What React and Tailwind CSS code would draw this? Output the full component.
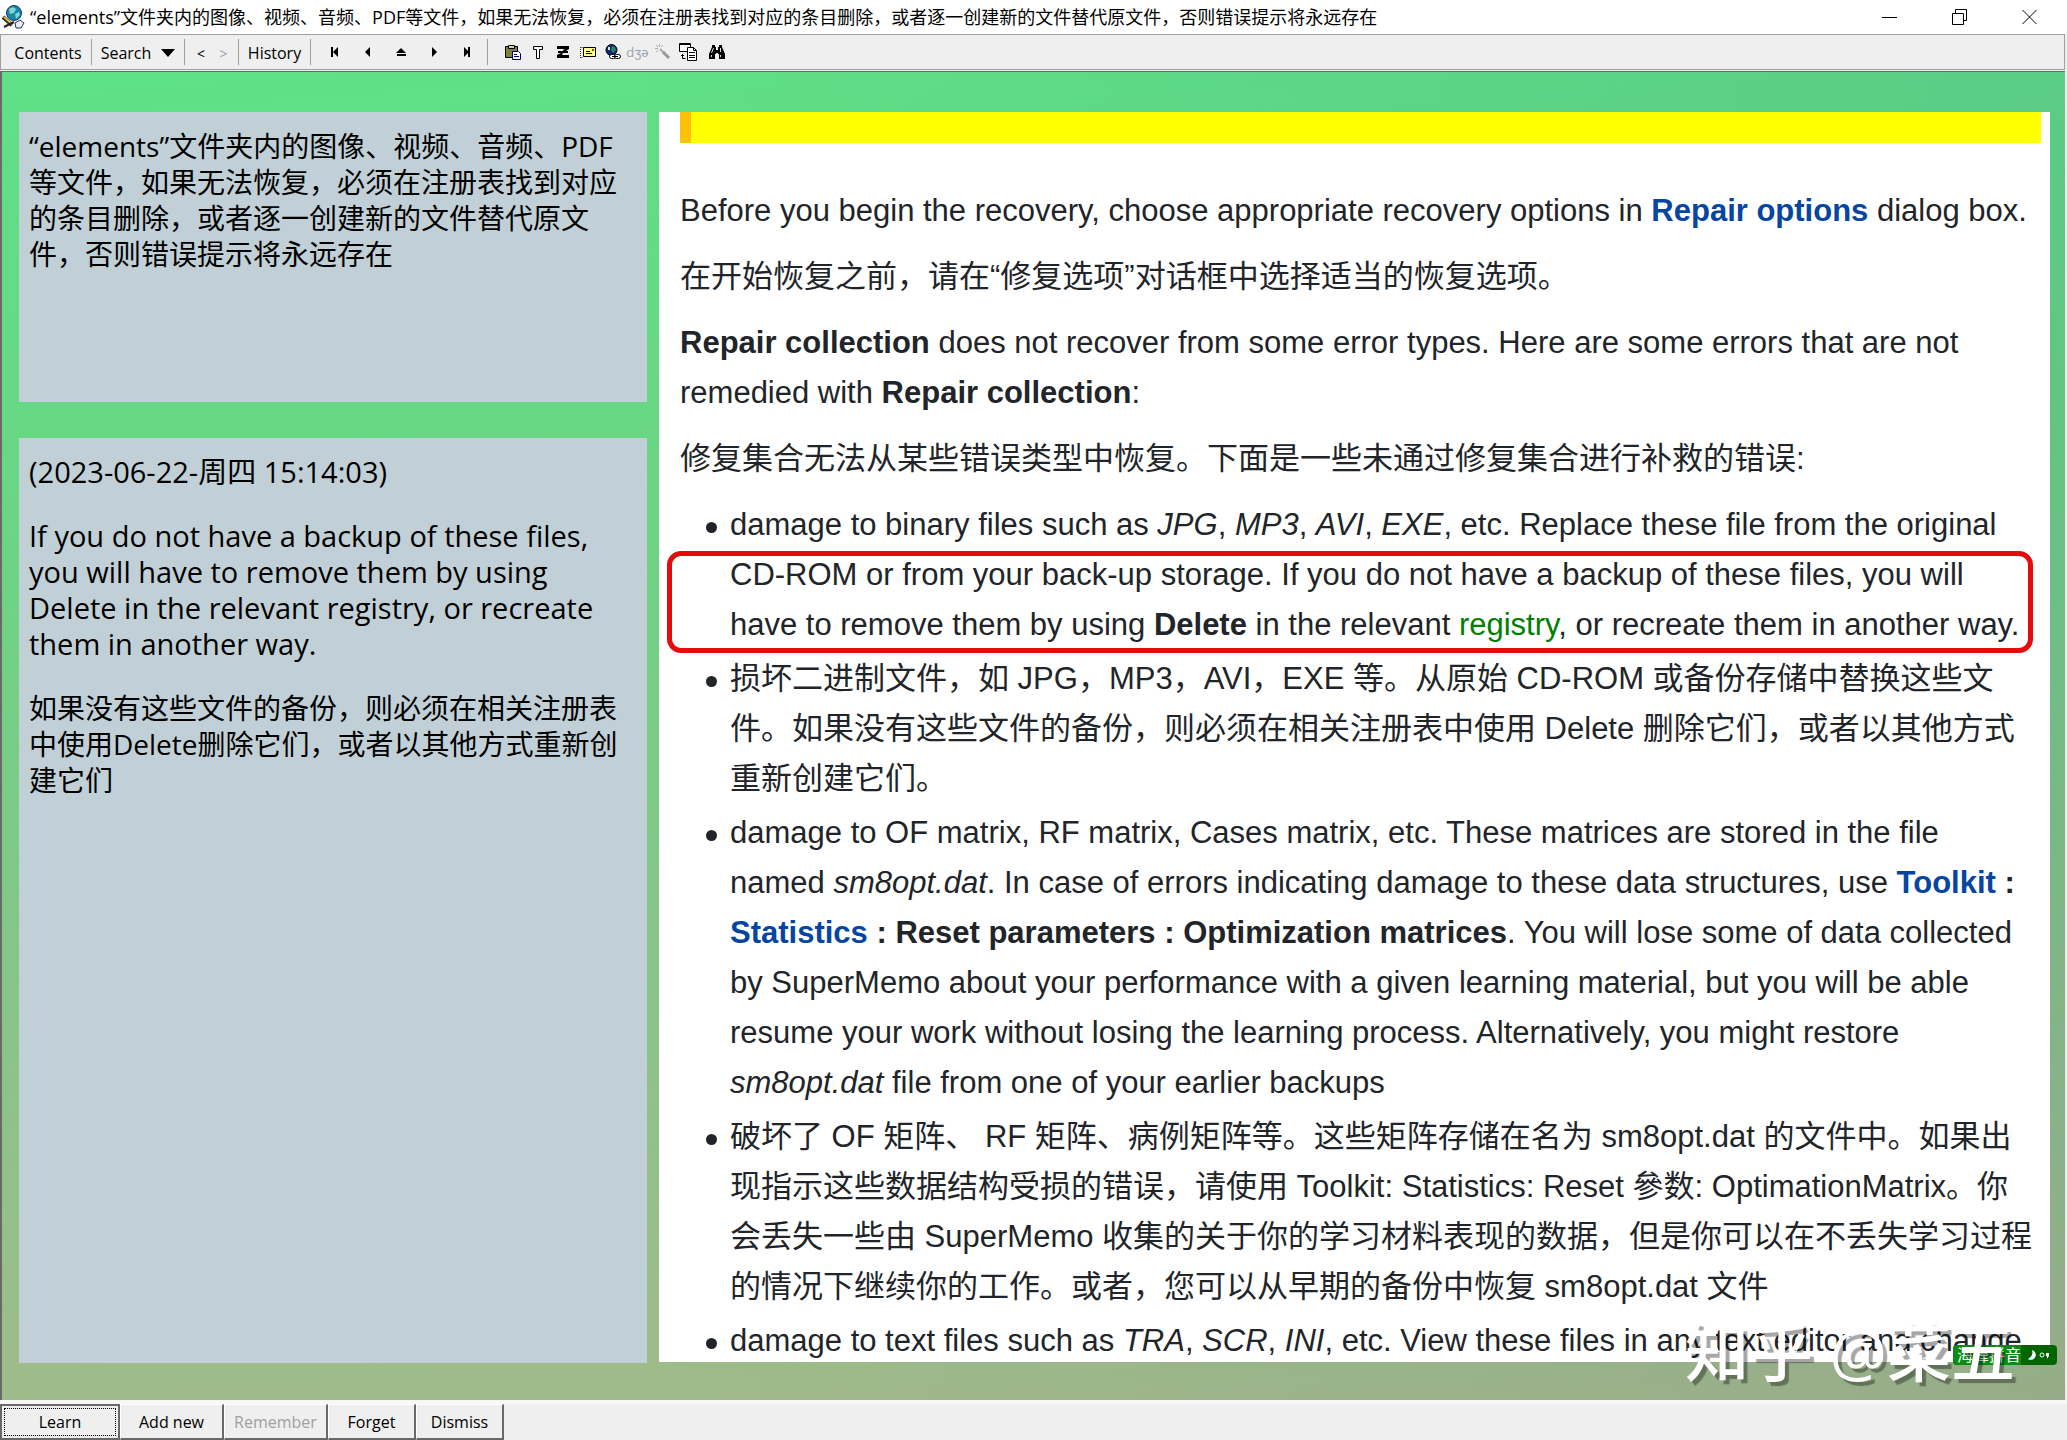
import React from 'react'

const navIcons = [
  { label: 'First', paths: ['M4 3h2v10h-2z', 'M11 3v10l-5-5z'] },
  { label: 'Back', paths: ['M10 3v10l-5-5z'] },
  { label: 'Up', paths: ['M8 4l5 5h-10z', 'M4 10h9v2h-9z'] },
  { label: 'Forward', paths: ['M6 3v10l5-5z'] },
  { label: 'Last', paths: ['M5 3v10l5-5z', 'M9 3h2v10h-2z'] },
]

function AppIcon() {
  return (
    <svg className="w-6 h-6 shrink-0" viewBox="0 0 24 24" aria-hidden="true">
      <circle cx="12" cy="8" r="7.500" fill="#1a86a8" stroke="#123a66" />
      <path d="M7 4l4-2 3 2-2 4-4 1zM13 9l4-2 1 3-4 4z" fill="#7fd6cf" />
      <path d="M1 12l9 8" stroke="#222" strokeWidth="4" />
      <path d="M2 12l8 7" stroke="#d9c24a" strokeWidth="2" />
      <path d="M2 22l10-5" stroke="#222" strokeWidth="2" />
      <path d="M13 18l5-3 4 3-3 5h-5z" fill="#e8ecf8" stroke="#26306a" />
    </svg>
  )
}

function PasteIcon() {
  return (
    <svg className="w-4 h-4" viewBox="0 0 16 16" aria-hidden="true">
      <path d="M0.500 2.500h12v11h-12z" fill="#80803c" stroke="#000" />
      <path d="M3.500 1.500h6v3h-6z" fill="#d8d890" stroke="#000" />
      <path d="M7.500 7.500h6l2 2v6h-8z" fill="#fff" stroke="#000066" />
      <path d="M9 10.500h3M9 12.500h5" stroke="#000066" />
    </svg>
  )
}

function TextIcon() {
  return (
    <svg className="w-4 h-4" viewBox="0 0 16 16" aria-hidden="true">
      <path d="M3.500 2.500h9v3h-3v9h-3v-9h-3z" fill="#fff" stroke="#000" />
    </svg>
  )
}

function ZIcon() {
  return (
    <svg className="w-4 h-4" viewBox="0 0 16 16" aria-hidden="true">
      <path d="M2 2h12v3l-3 2h2v2h-5l-1 2h7v3h-12v-3l4-2h-3v-2h5l1-2h-7z" fill="#000" />
    </svg>
  )
}

function CardIcon() {
  return (
    <svg className="w-4 h-4" viewBox="0 0 16 16" aria-hidden="true">
      <path d="M3.500 3.500h12v9h-12z" fill="#ffff9c" stroke="#000" />
      <path d="M0.500 3v11" stroke="#333" strokeDasharray="1 1" />
      <path d="M1 3.500h2M1 13.500h2" stroke="#888" />
      <path d="M6 7.500h4M6 9.500h6" stroke="#000" />
      <path d="M12 5h2v2h-2z" fill="#a33" />
    </svg>
  )
}

function WebIcon() {
  return (
    <svg className="w-4 h-4" viewBox="0 0 16 16" aria-hidden="true">
      <circle cx="6.500" cy="6" r="5.500" fill="#0b2a7a" stroke="#000" />
      <path d="M7 2l3 1 1 3-3 3-2-3z" fill="#2f8060" />
      <path d="M3 3h2v3h-2z" fill="#c9efe0" />
      <rect x="4.500" y="10.500" width="6" height="4" rx="2" fill="#fff" stroke="#000" />
      <rect x="9.500" y="10.500" width="6" height="4" rx="2" fill="#fff" stroke="#000" />
      <path d="M7 12.500h6" stroke="#000" />
    </svg>
  )
}

function WandIcon() {
  return (
    <svg className="w-4 h-4" viewBox="0 0 16 16" aria-hidden="true">
      <path d="M5 5l4 4" stroke="#aaa" strokeWidth="2" />
      <path d="M8 8l6 6" stroke="#999" strokeWidth="3" />
      <path d="M0 4.500h3M4.500 0v3M1 1l2 2M8 1l-2 2M1 8l2-2" stroke="#aaa" />
    </svg>
  )
}

function WindowsIcon() {
  return (
    <svg className="w-5 h-5" viewBox="0 0 20 20" aria-hidden="true">
      <path d="M1.500 1.500h11v8h-11z" fill="#fff" stroke="#000" />
      <path d="M1 2.500h12" stroke="#000" />
      <path d="M9.500 5.500h6l3 3v10h-9z" fill="#fff" stroke="#000" />
      <path d="M15.500 5.500v3h3M11 10.500h6M11 13.500h6M11 15.500h6" fill="none" stroke="#000" />
      <path d="M4.500 12v4.500h3M3 13.500h3" fill="none" stroke="#000" />
    </svg>
  )
}

function FindIcon() {
  return (
    <svg className="w-4 h-4" viewBox="0 0 16 16" aria-hidden="true">
      <path d="M3 1h3v2h1v3h2v-3h1v-2h3v2l3 7v5h-6v-5h-1v-1h-2v1h-1v5h-6v-5l3-7z" fill="#000" />
      <path d="M4.500 4l-2 5M11.500 4v4M2.500 11v2M11.500 11v2" stroke="#ddd" />
    </svg>
  )
}

const tools = [
  { label: 'Paste', icon: <PasteIcon /> },
  { label: 'Text', icon: <TextIcon /> },
  { label: 'Cloze', icon: <ZIcon /> },
  { label: 'Card', icon: <CardIcon /> },
  { label: 'Web', icon: <WebIcon /> },
  { label: 'Phonetics', icon: <span className="text-[13px] leading-4 text-gray-400">dʒə</span> },
  { label: 'Wizard', icon: <WandIcon /> },
  { label: 'Copy windows', icon: <WindowsIcon /> },
]

const actions = [
  { label: 'Add new', width: 'w-[104px]' },
  { label: 'Remember', width: 'w-[104px]', disabled: true },
  { label: 'Forget', width: 'w-[88px]' },
  { label: 'Dismiss', width: 'w-[88px]' },
]

function TitleBar() {
  return (
    <header className="h-[34px] flex items-center bg-white px-[2px]">
      <AppIcon />
      <h1 className="flex-1 ml-1 text-[18px] leading-6 whitespace-nowrap">
        “elements”文件夹内的图像、视频、音频、PDF等文件，如果无法恢复，必须在注册表找到对应的条目删除，或者逐一创建新的文件替代原文件，否则错误提示将永远存在
      </h1>
      <button type="button" aria-label="Minimize" className="w-[70px] h-8 flex items-center justify-center">
        <svg className="w-4 h-4" viewBox="0 0 16 16"><path d="M0 8.500h15" stroke="#000" /></svg>
      </button>
      <button type="button" aria-label="Restore" className="w-[70px] h-8 flex items-center justify-center">
        <svg className="w-4 h-4" viewBox="0 0 16 16" fill="none" stroke="#000">
          <path d="M0.500 4.500h11v11h-11z" />
          <path d="M3.500 4v-3.500h11v11h-3" />
        </svg>
      </button>
      <button type="button" aria-label="Close" className="w-[70px] h-8 flex items-center justify-center">
        <svg className="w-4 h-4" viewBox="0 0 16 16" stroke="#000"><path d="M0.500 1l14 14M14.500 1l-14 14" /></svg>
      </button>
    </header>
  )
}

function Divider() {
  return <span className="w-px h-[26px] bg-[#a0a0a0]" />
}

function Toolbar() {
  return (
    <nav className="h-9 mr-[2px] flex items-center bg-[#efefef] border border-[#a0a0a0] text-base">
      <button type="button" className="w-[90px] pl-1 pt-[2px] text-center">Contents</button>
      <Divider />
      <button type="button" className="w-[92px] pt-[2px] flex items-center justify-center gap-[10px]">
        Search
        <svg className="w-[14px] h-2" viewBox="0 0 14 8"><path d="M0 0h14l-7 8z" /></svg>
      </button>
      <Divider />
      <button type="button" className="w-[28px] pl-1 pt-1 text-sm">&lt;</button>
      <button type="button" disabled className="w-[25px] pr-1 pt-1 text-sm text-gray-400">&gt;</button>
      <Divider />
      <button type="button" className="w-[71px] pt-[2px] text-center">History</button>
      <Divider />
      <div className="flex ml-[7px]">
        {navIcons.map((icon) => (
          <button key={icon.label} type="button" aria-label={icon.label} className="w-[33px] h-8 flex items-center justify-center">
            <svg className="w-4 h-4" viewBox="0 0 16 16">
              {icon.paths.map((d) => <path key={d} d={d} />)}
            </svg>
          </button>
        ))}
      </div>
      <span className="w-px h-[26px] bg-[#a0a0a0] ml-1 mr-3" />
      {tools.map((tool) => (
        <button key={tool.label} type="button" aria-label={tool.label} className="w-[25px] h-8 flex items-center justify-center">
          {tool.icon}
        </button>
      ))}
      <button type="button" aria-label="Find" className="w-[25px] h-8 ml-1 flex items-center justify-center">
        <FindIcon />
      </button>
    </nav>
  )
}

function Notes() {
  return (
    <div className="w-[628px] shrink-0 flex flex-col gap-9">
      <section className="h-[290px] bg-[#c1d0d6] px-[10px] py-4 text-[28px] leading-9">
        “elements”文件夹内的图像、视频、音频、PDF等文件，如果无法恢复，必须在注册表找到对应的条目删除，或者逐一创建新的文件替代原文件，否则错误提示将永远存在
      </section>
      <section className="flex-1 bg-[#c1d0d6] px-[10px] py-4 leading-9 flex flex-col gap-7">
        <p className="text-[29px]">(2023-06-22-周四 15:14:03)</p>
        <p className="text-[29px]">
          If you do not have a backup of these files, you will have to remove them by using Delete in the relevant registry, or recreate them in another way.
        </p>
        <p className="text-[28px]">
          如果没有这些文件的备份，则必须在相关注册表中使用Delete删除它们，或者以其他方式重新创建它们
        </p>
      </section>
    </div>
  )
}

function Item({ children }) {
  return (
    <li className="relative before:content-[''] before:float-left before:-ml-6 before:mr-[13px] before:mt-[22px] before:size-[11px] before:rounded-full before:bg-[#212529]">
      {children}
    </li>
  )
}

function Article() {
  return (
    <article className="flex-1 min-w-0 h-[1250px] overflow-hidden bg-white pl-[21px] pr-[9px] text-[31px] leading-[50px] text-[#212529] font-['Liberation_Sans','Noto_Sans_CJK_SC',sans-serif]">
      <div className="h-[31px] mb-[43px] bg-[#ffff00] border-l-[11px] border-[#ffc107]" />
      <p className="mb-4">
        Before you begin the recovery, choose appropriate recovery options in <a href="#repair" className="font-bold text-[#0645a0]">Repair options</a> dialog box.
      </p>
      <p className="mb-4">在开始恢复之前，请在“修复选项”对话框中选择适当的恢复选项。</p>
      <p className="mb-4">
        <b>Repair collection</b> does not recover from some error types. Here are some errors that are not remedied with <b>Repair collection</b>:
      </p>
      <p className="mb-4">修复集合无法从某些错误类型中恢复。下面是一些未通过修复集合进行补救的错误:</p>
      <ul className="pl-[50px] pr-2 flex flex-col gap-1">
        <Item>
          damage to binary files such as <i>JPG</i>, <i>MP3</i>, <i>AVI</i>, <i>EXE</i>, etc. Replace these file from the original CD-ROM or from your back-up storage. If you do not have a backup of these files, you will have to remove them by using <b>Delete</b> in the relevant <a href="#registry" className="text-[#008000]">registry</a>, or recreate them in another way.
          <span className="absolute -left-[63px] right-0 top-[51px] h-[102px] border-[5px] border-[#e60c0c] rounded-[14px]" />
        </Item>
        <Item>
          损坏二进制文件，如 JPG，MP3，AVI，EXE 等。从原始 CD-ROM 或备份存储中替换这些文件。如果没有这些文件的备份，则必须在相关注册表中使用 Delete 删除它们，或者以其他方式重新创建它们。
        </Item>
        <Item>
          damage to OF matrix, RF matrix, Cases matrix, etc. These matrices are stored in the file named <i>sm8opt.dat</i>. In case of errors indicating damage to these data structures, use <b><a href="#toolkit" className="text-[#0645a0]">Toolkit</a> : <a href="#statistics" className="text-[#0645a0]">Statistics</a> : Reset parameters : Optimization matrices</b>. You will lose some of data collected by SuperMemo about your performance with a given learning material, but you will be able resume your work without losing the learning process. Alternatively, you might restore <i>sm8opt.dat</i> file from one of your earlier backups
        </Item>
        <Item>
          破坏了 OF 矩阵、 RF 矩阵、病例矩阵等。这些矩阵存储在名为 sm8opt.dat 的文件中。如果出现指示这些数据结构受损的错误，请使用 Toolkit: Statistics: Reset 參数: OptimationMatrix。你会丢失一些由 SuperMemo 收集的关于你的学习材料表现的数据，但是你可以在不丢失学习过程的情况下继续你的工作。或者，您可以从早期的备份中恢复 sm8opt.dat 文件
        </Item>
        <Item>
          damage to text files such as <i>TRA</i>, <i>SCR</i>, <i>INI</i>, etc. View these files in any text editor and change
        </Item>
      </ul>
    </article>
  )
}

function ActionBar() {
  return (
    <footer className="h-10 flex bg-[#efefef] border-t-4 border-[#f7f7f7] text-base">
      <button type="button" className="w-[120px] border-2 border-[#696969] p-[2px]">
        <span className="h-full flex items-center justify-center border border-dotted border-black">Learn</span>
      </button>
      {actions.map((action) => (
        <button
          key={action.label}
          type="button"
          disabled={action.disabled}
          className={`${action.width} border-r-2 border-b-2 border-t border-l border-t-white border-l-white border-r-[#696969] border-b-[#696969] disabled:text-[#a0a0a0]`}
        >
          {action.label}
        </button>
      ))}
    </footer>
  )
}

export default function App() {
  return (
    <div lang="zh-CN" className="relative min-h-screen flex flex-col overflow-hidden bg-[#efefef] text-black font-['Open_Sans','Noto_Sans_CJK_SC',sans-serif]">
      <TitleBar />
      <Toolbar />
      <main className="flex-1 mt-px mr-[2px] flex gap-3 pl-[17px] pr-[15px] pt-10 pb-[37px] border-l-2 border-t border-[#696969] bg-[linear-gradient(90deg,transparent_30%,rgba(30,85,125,0.12)_100%),linear-gradient(176deg,#5ee187_0%,#6bd584_32%,#85c688_60%,#a7b88b_100%)]">
        <Notes />
        <Article />
      </main>
      <ActionBar />

      {/* input method indicator */}
      <div className="absolute right-[10px] bottom-[75px] w-[104px] h-5 flex items-center rounded bg-[#006400] text-white text-[16px] overflow-hidden">
        <span className="w-[68px] pl-1 bg-[#0a8c14] leading-5 whitespace-nowrap overflow-hidden">海峰拼音</span>
        <svg className="w-9 h-5" viewBox="0 0 36 20" fill="#fff">
          <path d="M11 5a5 5 0 1 1-4 9a7 7 0 0 0 4-9z" />
          <circle cx="21" cy="10" r="2" fill="none" stroke="#fff" />
          <path d="M25 8h3v3l-2 3v-3h-1z" />
        </svg>
      </div>
      <div className="absolute right-[52px] bottom-[48px] text-[64px] leading-[80px] font-medium text-white whitespace-nowrap [text-shadow:4px_4px_1px_rgba(0,0,0,0.35)]">
        知乎 @菜五
      </div>
    </div>
  )
}
